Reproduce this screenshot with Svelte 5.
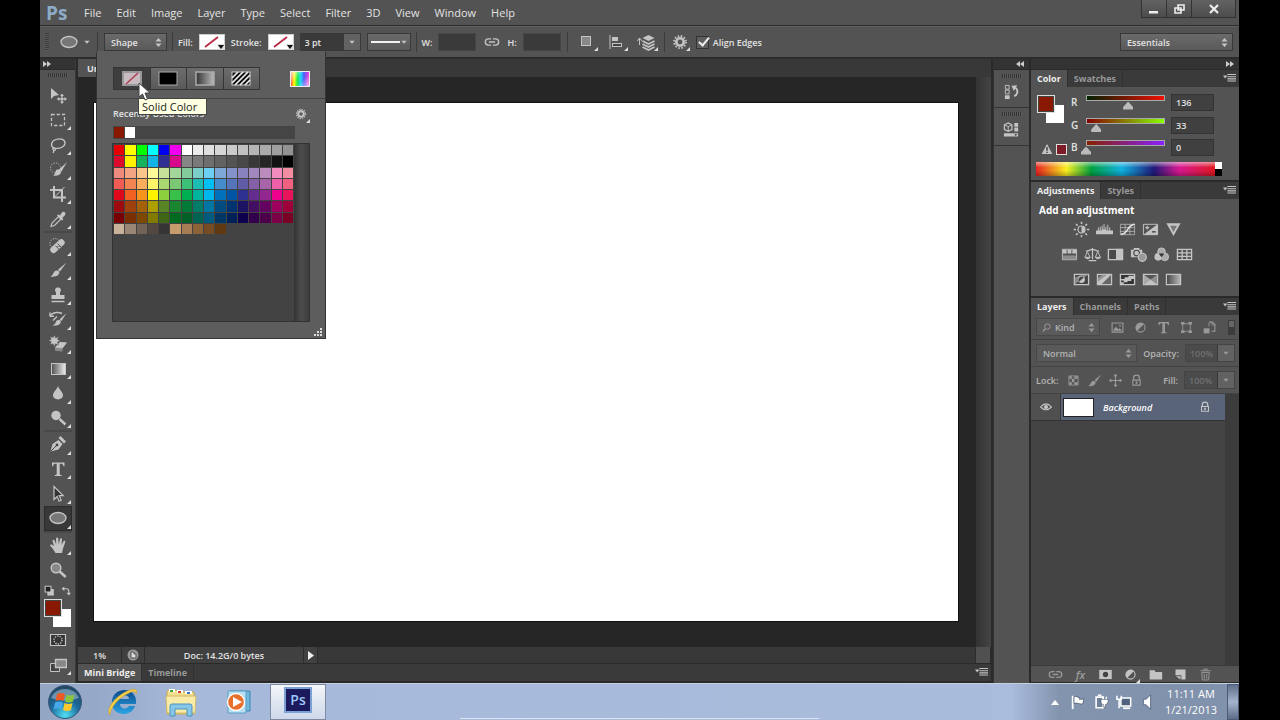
<script>
  const menus = ['File', 'Edit', 'Image', 'Layer', 'Type', 'Select', 'Filter', '3D', 'View', 'Window', 'Help'];

  const toolGroups = [
    ['move', 'marquee', 'lasso', 'quick', 'crop', 'eyedropper'],
    ['heal', 'brush', 'stamp', 'history', 'eraser', 'gradient', 'drop', 'dodge'],
    ['pen', 'type', 'arrow', 'ellipse'],
    ['hand', 'zoom'],
  ];
  const noFlyout = ['move', 'zoom'];

  const adjustments = [
    ['sun', 'levels', 'curves', 'exposure', 'vibrance'],
    ['hue', 'balance', 'bw', 'photo', 'mixer', 'lookup'],
    ['invert', 'poster', 'threshold', 'selective', 'gradmap'],
  ];
  const filters = ['image', 'half', 'type', 'shape', 'smart'];
  const locks = ['checker', 'brush', 'moveall', 'lock'];
  const footer = ['link', 'fx', 'mask', 'half', 'folder', 'newlayer', 'trash'];

  const palette = [
    '#e80000 #ffff00 #00ff00 #00ffff #0000f0 #f000f0 #ffffff #ececec #e0e0e0 #d6d6d6 #cacaca #c0c0c0 #b5b5b5 #aaaaaa #9e9e9e #929292',
    '#dd0a2c #fff200 #16b35c #12b4e6 #302e92 #d80a8c #868686 #7a7a7a #6e6e6e #626262 #545454 #484848 #383838 #262626 #121212 #000000',
    '#f08a7c #f4a482 #fac48a #fff899 #c6e29a #a2d69a #82cc9c #7bcdc8 #6ccff4 #7ea8d8 #8492cc #8882be #a286be #bc8cbe #f28cbe #f28ca0',
    '#ee5c54 #f28454 #f8ae5c #fff568 #aad870 #7ac874 #3cc078 #1abcb4 #00bff3 #448ccb #5674b9 #605ca8 #8560a8 #a864a8 #f060a8 #f06080',
    '#e0081c #f26022 #f7941d #fff200 #8cd03e #39c04a #00b050 #00b49d #00b8ee #0072bc #0054a6 #2e3192 #662d91 #92278f #ec008c #e8145b',
    '#9e0b0f #a0410d #a36209 #aba000 #598527 #1a8530 #007a36 #007c6b #0076a3 #004b80 #003471 #1b1464 #440e62 #630460 #9e005d #9e0039',
    '#790000 #7b2e00 #7d4900 #827b00 #406618 #006a20 #006026 #006452 #005b7f #003663 #002157 #0d004c #32004b #4b0049 #7b0046 #7a0026',
    '#c8b299 #998675 #736357 #534741 #373435 #c69c6d #a67c52 #8c6239 #754c24 #603913',
  ].flatMap((row) => row.split(' '));

  let channels = $state([
    { id: 'R', value: 136, cls: 'red' },
    { id: 'G', value: 33, cls: 'green' },
    { id: 'B', value: 0, cls: 'blue' },
  ]);
  let strokeWidth = $state('3 pt');
  let alignEdges = $state(true);
  let activeTool = $state('ellipse');

  // 18x18 glyphs, drawn in currentColor
  const icons = {
    move: '<path d="M2 2v11l3-3 5-1z" fill="currentColor"/><path d="M13 9v8M9 13h8" stroke="currentColor" stroke-width="1.4"/><path d="M13 7.500l-2 2.500h4zM13 18l-2-2.500h4zM7.800 13l2.400-2v4zM18 13l-2.400-2v4z" fill="currentColor"/>',
    marquee: '<rect x="2.500" y="3.500" width="13" height="11" fill="none" stroke="currentColor" stroke-width="1.300" stroke-dasharray="3.200 2"/>',
    lasso: '<path d="M5 12C1 10 2 5 7 3.500s9 0 9 3.500-5 6-9.500 5.200C4 11.500 3 13 4.500 14s3-.5 1-2M4.800 14q.2 1.500-.8 3" fill="none" stroke="currentColor" stroke-width="1.300"/>',
    quick: '<circle cx="6.500" cy="8" r="5" fill="none" stroke="currentColor" stroke-dasharray="1.200 1.400"/><path d="M18 2l-5.500 9.500-2.500-2z" fill="currentColor"/><path d="M9.500 9.500c2 0 3.500 2 2 4s-4 2.500-7.500 2c2-1 2-2 2.500-4s1.500-2 3-2z" fill="currentColor"/>',
    crop: '<path d="M5 1v11.500h12M1 5h12v12" fill="none" stroke="currentColor" stroke-width="2"/><path d="M6 11.500L15.500 2" stroke="currentColor"/>',
    eyedropper: '<path d="M2 16.500l1-3.500 6.500-6.500 2.500 2.500-6.500 6.500z" fill="none" stroke="currentColor" stroke-width="1.200"/><path d="M8 5.500l1.300-1.200 1.500 1.200 2.200-3c1.500-1.800 4.500.5 3 2.700l-2.700 2.500 1 1.500-1.200 1.300z" fill="currentColor"/>',
    heal: '<circle cx="6" cy="7.500" r="5" fill="none" stroke="currentColor" stroke-dasharray="1.200 1.400"/><rect x="0" y="6.500" width="17" height="6.500" rx="3" transform="rotate(-43 9 10)" fill="currentColor"/><path d="M8.500 7.500l4 4M6.500 9.800l4 4" stroke="#535353"/><path d="M8.500 10.500h1M10.500 10.500h1" stroke="#444"/>',
    brush: '<path d="M17.500 1.500l-6.500 9-2-1.700z" fill="currentColor"/><path d="M8.300 9.500c1.700.2 2.500 1.500 1.800 3-.8 2.500-4.500 3.700-9.100 3.200 2-.6 2.500-1.700 3.500-3.700s2-2.700 3.800-2.500z" fill="currentColor"/>',
    stamp: '<path d="M7 9V6.500C5 3.500 6.500 1.500 9 1.500s4 2 2 5V9h4.500v4h-13V9z" fill="currentColor"/><path d="M2.500 15.500h13" stroke="currentColor" stroke-width="1.500"/>',
    history: '<path d="M1.500 5C5 2 10 2 13 3.500M1 6.500V2.500M1 6.200h4M8 6.500l-4 4" fill="none" stroke="currentColor" stroke-width="1.400"/><path d="M17.500 3l-5 8-2-1.600z" fill="currentColor"/><path d="M10 10c1.700.2 2.300 1.500 1.600 2.800-.8 2-4 3.400-8.100 3 2-.8 2.500-1.800 3.200-3.500S8.300 9.800 10 10z" fill="currentColor"/>',
    eraser: '<path d="M6 12.500L11 7l7 .5-4.500 6v3l-7.500-.8z" fill="#8a8a8a"/><path d="M6 12.500L11 7l7 .5-4.500 5.800z" fill="currentColor"/><path d="M5.500 0l1.200 3 3-1.500-1.200 3 3 1.200-3 1.300 1 3-3-1.200-1.200 3-1.300-3-3 1 1.200-3-2.700-1.300 2.700-1.200L1.200 1.500l3 1z" fill="currentColor" stroke="#535353" stroke-width=".5"/>',
    gradient: '<defs><linearGradient id="g1"><stop stop-color="#505050"/><stop offset="1" stop-color="#f0f0f0"/></linearGradient></defs><rect x="2.500" y="3.500" width="14" height="11" fill="url(#g1)" stroke="currentColor"/>',
    drop: '<path d="M9 2c1 3.500 5 6 5 9.300 0 5.500-10 5.500-10 0C4 8 8 5.500 9 2z" fill="currentColor"/>',
    dodge: '<circle cx="7" cy="6.500" r="4.700" fill="currentColor"/><path d="M10.500 10l6 5.500" stroke="currentColor" stroke-width="2.400"/>',
    pen: '<path d="M1.500 16.500L3.500 9l6-4 4 4-4 5.500z" fill="currentColor"/><path d="M9.500 3l2-2 5.500 5.500-2 2z" fill="currentColor"/><path d="M2 16l5.500-5.500" stroke="#444"/><circle cx="8" cy="10" r="1.400" fill="#444"/>',
    type: '<path d="M3 2.500h12.500v3.800h-1c-.3-2-1-2.500-3.800-2.500v10c0 1 .5 1.200 2 1.300v.9h-7v-.9c1.600-.1 2-.3 2-1.300v-10C5 3.800 4.300 4.300 4 6.300H3z" fill="currentColor"/>',
    arrow: '<path d="M5 1.500v13l3.200-3 2 4.800 2-1-2-4.600h4z" fill="#333" stroke="currentColor" stroke-width="1.200"/>',
    ellipse: '<ellipse cx="9" cy="9" rx="8" ry="5.500" fill="#777" stroke="currentColor" stroke-width="1.300"/>',
    hand: '<path d="M6.500 17C5 14 3 12 1 9.500c.5-1.500 2-1.300 4 .8L3.500 4.500c.3-1.300 1.800-1 2.200.3L7.200 8.500 7 2.500c.3-1.300 2-1.300 2.200 0l.6 6 1.200-5.500c.5-1.200 2-1 2 .3L12.500 9l2-3.700c.8-1 2.200-.4 1.800.8L14 12.500l-1 4.500z" fill="currentColor"/>',
    zoom: '<circle cx="7" cy="7" r="4.800" fill="#888" stroke="currentColor" stroke-width="1.500"/><path d="M10.700 10.500l6 5.500" stroke="currentColor" stroke-width="2.600"/>',
    gear: '<circle cx="9" cy="9" r="4.200" fill="none" stroke="currentColor" stroke-width="3"/><circle cx="9" cy="9" r="6.800" fill="none" stroke="currentColor" stroke-width="2" stroke-dasharray="1.800 1.760"/>',
    link: '<path d="M8 5.500H5a3.400 3.400 0 0 0 0 7h3M10 5.500h3a3.400 3.400 0 0 1 0 7h-3M5.500 9h7" fill="none" stroke="currentColor" stroke-width="1.600"/>',
    combine: '<rect x="4.500" y="3.500" width="9" height="9" fill="#888" stroke="currentColor"/>',
    align: '<path d="M3 2v14" stroke="currentColor"/><rect x="5" y="4" width="6" height="4" fill="currentColor"/><rect x="5.500" y="10.500" width="9" height="3" fill="#444" stroke="currentColor"/>',
    stack: '<path d="M11.500 2l6 3-6 3-6-3z" fill="currentColor"/><path d="M5.500 8l6 3 6-3M5.500 11l6 3 6-3M5.500 14l6 3 6-3" fill="none" stroke="currentColor" stroke-width="1.700"/><path d="M2.500 5v7M0 8l2.500-3L5 8" fill="none" stroke="currentColor"/>',
    dockhist: '<path d="M2.500 2.500h4v4h-4zM2.500 7.500h4v4h-4z" fill="none" stroke="currentColor"/><path d="M2 13h5v4H2z" fill="currentColor"/><path d="M12 14c4-2 4.500-7 .5-9.500" fill="none" stroke="currentColor" stroke-width="2"/><path d="M9 3l6-.5-3.500 6z" fill="currentColor"/>',
    dockprops: '<path d="M5.500 2l4 2v5l-4 2-4-2V4z" fill="none" stroke="currentColor" stroke-width="1.300"/><path d="M1.500 4l4 2 4-2M5.500 6v5" stroke="currentColor" fill="none"/><path d="M12 2h4v4h-4zM12 7h4v4h-4zM1 13h15v3.500H1z" fill="currentColor"/><path d="M12 14h3l-1.500 2z" fill="#333"/>',
    sun: '<circle cx="9" cy="9" r="3.700" fill="none" stroke="currentColor" stroke-width="1.300"/><path d="M9 5.500a3.500 3.500 0 0 1 0 7z" fill="currentColor"/><path d="M9 .8v2.400M9 14.800v2.400M.8 9h2.400M14.800 9h2.400M3.200 3.200l1.700 1.700M13.100 13.100l1.700 1.700M14.800 3.200l-1.700 1.700M4.900 13.100l-1.700 1.700" stroke="currentColor" stroke-width="1.600"/>',
    levels: '<path d="M0 14v-4h2V7h1v3h1V6h1v4h1V5h1v4h1V3h1v6h1V6h1v4h1V4h1v6h1V7h1v3h3v4z" fill="currentColor"/>',
    curves: '<path d="M1.500 3.500h15v11h-15zM1.500 7h15M1.500 11h15M6.500 3.500v11M11.500 3.500v11" fill="none" stroke="currentColor" stroke-opacity=".75"/><path d="M2 14c8 0 6-9.500 14.500-10.500" fill="none" stroke="#e8e8e8" stroke-width="1.500"/>',
    exposure: '<path d="M1.500 3.500h15v11h-15z" fill="none" stroke="currentColor"/><path d="M16.500 3.500v11h-15z" fill="currentColor"/><path d="M3.500 7h4M5.500 5v4" stroke="currentColor" stroke-width="1.200"/><path d="M10.500 11.500h4" stroke="#333" stroke-width="1.300"/>',
    vibrance: '<path d="M1.500 2.500h15L9 16z" fill="currentColor"/><path d="M5.500 5h7L9 12z" fill="#777"/>',
    hue: '<path d="M1.500 3.500h15v11h-15z" fill="none" stroke="currentColor"/><path d="M2 4h4v4H2zM7 4h4v4H7zM12 4h4v4h-4z" fill="currentColor"/><path d="M2 10h14v4H2z" fill="#8c8c8c"/>',
    balance: '<path d="M9 2v12M5 15.500h8M2 5.500c4 0 4-2 7-2s3 2 7 2" stroke="currentColor" stroke-width="1.300" fill="none"/><path d="M3.500 6L1 12h5.500zM14.500 6L12 12h5.500z" fill="none" stroke="currentColor"/><path d="M.5 12H7q-3 4-6.500 0zM11.500 12H18q-3 4-6.500 0z" fill="currentColor"/>',
    bw: '<path d="M1.500 3.500h15v11h-15z" fill="#4a4a4a" stroke="currentColor" stroke-width="1.400"/><path d="M9.500 3h7v11.500h-7z" fill="currentColor"/>',
    photo: '<path d="M1 4h3V2h6v2h3v8H1z" fill="currentColor"/><circle cx="7" cy="7.500" r="3" fill="none" stroke="#444" stroke-width="1.200"/><circle cx="13" cy="12" r="4.300" fill="#999" stroke="currentColor" stroke-width="1.200"/>',
    mixer: '<circle cx="9" cy="6" r="4" fill="#aaa" stroke="currentColor"/><circle cx="5.500" cy="11.500" r="4" fill="currentColor"/><circle cx="12.500" cy="11.500" r="4" fill="#aaa" stroke="currentColor"/><path d="M6 8h6l-3 4z" fill="#333"/>',
    lookup: '<path d="M1.500 3.500h15v11h-15zM1.500 7.200h15M1.500 11h15M6.500 3.500v11M11.500 3.500v11" fill="none" stroke="currentColor" stroke-width="1.400"/>',
    invert: '<path d="M1.500 3.500h15v11h-15z" fill="#444" stroke="currentColor" stroke-width="1.400"/><path d="M2 14L16 4H9L2 7z" fill="#888"/><circle cx="9" cy="9" r="3.600" fill="currentColor"/><path d="M6.500 11.500l5-5a3.600 3.600 0 0 0-5 5z" fill="#444"/>',
    poster: '<path d="M1.500 3.500h15v11h-15z" fill="#666" stroke="currentColor" stroke-width="1.300"/><path d="M2 11l9-7h5L6 14H2z" fill="currentColor"/><path d="M2 8l5-4h4l-9 7z" fill="#999"/>',
    threshold: '<path d="M1.500 3.500h15v11h-15z" fill="#333" stroke="currentColor" stroke-width="1.400"/><path d="M2 8.500h4v-2h4V5h6v3.500h-3v2H9V12H5v2H2v-2h3v-2H2z" fill="currentColor"/>',
    selective: '<path d="M1.500 3.500h15v11h-15z" fill="#555" stroke="currentColor" stroke-width="1.300"/><path d="M2 4l7 5-7 5z" fill="#aaa"/><path d="M16 4L9 9l7 5z" fill="#909090"/><path d="M2 14l7-5 7 5z" fill="currentColor"/>',
    gradmap: '<defs><linearGradient id="g2"><stop stop-color="#444"/><stop offset="1" stop-color="#bbb"/></linearGradient></defs><path d="M1.500 3.500h15v11h-15z" fill="url(#g2)" stroke="currentColor" stroke-width="1.300"/>',
    image: '<path d="M2.500 3.500h13v11h-13z" fill="none" stroke="currentColor" stroke-width="1.300"/><path d="M4 12l3-4 3 3 1.500-1 2.500 2v1H4z" fill="currentColor"/><circle cx="12" cy="6.800" r="1" fill="currentColor"/>',
    half: '<circle cx="9" cy="9" r="5.500" fill="none" stroke="currentColor" stroke-width="1.300"/><path d="M13.200 4.800a6 6 0 0 0-8.400 8.400z" fill="currentColor"/>',
    shape: '<path d="M4.500 4.500h9v9h-9z" fill="none" stroke="currentColor"/><path d="M2.500 2.500h4v3h-4zM11.500 2.500h4v3h-4zM2.500 12.500h4v3h-4zM11.500 12.500h4v3h-4z" fill="currentColor"/>',
    smart: '<path d="M8.500 2.500h4l3 3v8h-4" fill="none" stroke="currentColor" stroke-width="1.300"/><path d="M2 10h7v6H2z" fill="currentColor"/><path d="M12 2v4h4M8.500 3v5" fill="none" stroke="currentColor"/>',
    checker: '<path d="M3.500 3.500h11v11h-11z" fill="none" stroke="currentColor"/><path d="M4 4h3v3H4zM10 4h4v3h-4zM7 7h3v4H7zM4 11h3v3H4zM10 11h4v3h-4z" fill="currentColor"/>',
    moveall: '<path d="M9 3v12M3 9h12" stroke="currentColor" stroke-width="1.300"/><path d="M9 1L6.500 4h5zM9 17l-2.500-3h5zM1 9l3-2.500v5zM17 9l-3-2.500v5z" fill="currentColor"/>',
    lock: '<path d="M5.500 8V6c0-4.500 7-4.500 7 0v2" fill="none" stroke="currentColor" stroke-width="1.500"/><path d="M4.500 8.500h9v6h-9z" fill="none" stroke="currentColor" stroke-width="1.300"/><path d="M9 10v3" stroke="currentColor" stroke-width="2"/>',
    eye: '<path d="M2 9q7-8 14 0-7 7-14 0z" fill="none" stroke="currentColor" stroke-width="1.400"/><circle cx="9" cy="9" r="2.700" fill="currentColor"/>',
    mask: '<path d="M1.500 3.500h15v11h-15z" fill="currentColor"/><circle cx="9" cy="9" r="3.200" fill="#444"/>',
    folder: '<path d="M2 4h6l1 2h8v9H2z" fill="currentColor"/>',
    newlayer: '<path d="M3 3h12v12h-5v-5H3z" fill="currentColor"/><path d="M3.500 11H9v4z" fill="currentColor"/>',
    trash: '<path d="M4.500 6.500h9l-.7 9H5.200zM3 4.500h12M7 4V2.500h4V4M7.500 8v6M10.500 8v6" fill="none" stroke="currentColor" stroke-width="1.200"/>',
    quickmask: '<path d="M1.500 3.500h15v11h-15z" fill="#333" stroke="currentColor" stroke-width="1.200"/><circle cx="9" cy="9" r="4" fill="none" stroke="currentColor" stroke-width="1.400" stroke-dasharray="1.300 1.200"/>',
    screen: '<path d="M1.500 7.500h9v8h-9z" fill="#444" stroke="currentColor"/><path d="M6.500 3.500h11v8h-11z" fill="#888" stroke="currentColor" stroke-width="1.300"/>',
    defaults: '<path d="M6 7h9v9H6z" fill="currentColor"/><path d="M3 3h8v8H3z" fill="#222" stroke="currentColor" stroke-width="1.500"/>',
    swap: '<path d="M5 5h5q4 0 4 5v3" fill="none" stroke="currentColor" stroke-width="2"/><path d="M1 5l5-4v8zM10 12h8l-4 5z" fill="currentColor"/>',
    search: '<circle cx="10.500" cy="7.500" r="4.500" fill="none" stroke="currentColor" stroke-width="1.600"/><path d="M7 11l-4 4.500" stroke="currentColor" stroke-width="2"/>',
    sort: '<path d="M9 0l6 7H3zM9 18l6-7H3z" fill="currentColor"/>',
    caret: '<path d="M3 6h12l-6 7z" fill="currentColor"/>',
    warn: '<path d="M9 1.500l8 15H1z" fill="currentColor"/><path d="M9 6v5.500M9 13v2" stroke="#333" stroke-width="2"/>',
    panelmenu: '<path d="M0 5h6l-3 4z" fill="currentColor"/><path d="M6 3.500h12M6 6.500h12M6 9.500h12M6 12.500h12" stroke="currentColor" stroke-width="1.500"/>',
    flag: '<path d="M3 2v15" stroke="#fff" stroke-width="2"/><path d="M4.500 3c3-1 4 1 6 1v2c2 0 3 0 5-.5l-1 5.500c-4 1-5-1.500-10-.5z" fill="#fff" stroke="#34455f" stroke-width=".7"/>',
    battery: '<path d="M3.500 3.500h8v12h-8z" fill="#718199" stroke="#fff" stroke-width="1.800"/><path d="M5.500 1.500h4M11 3v3M15 3v3" stroke="#fff" stroke-width="1.600"/><path d="M9 6h8v3q-1 3-3 3v3h-2v-3q-3 0-3-3z" fill="#fff" stroke="#34455f" stroke-width=".6"/>',
    network: '<path d="M5.500 4.500h11v9h-11z" fill="#50627e" stroke="#fff" stroke-width="1.700"/><path d="M8 16h8" stroke="#fff" stroke-width="2"/><path d="M1 2v4h5V2M3.500 6v10" fill="none" stroke="#fff" stroke-width="1.700"/>',
    speaker: '<path d="M5 6h3l5-5v16l-5-5H5z" fill="#fff" stroke="#34455f" stroke-width=".7"/>',
  };
</script>

{#snippet icon(name, size = 18)}
  <svg viewBox="0 0 18 18" width={size} height={size} aria-hidden="true">{@html icons[name]}</svg>
{/snippet}

{#snippet none()}
  <svg viewBox="0 0 26 16" width="26" height="16" aria-hidden="true">
    <rect x="0.500" y="0.500" width="25" height="15" fill="#fff" stroke="#ccc" />
    <path d="M6 13L19 3" stroke="#b82a48" stroke-width="1.800" />
    <path d="M18 10h8v6h-5z" fill="#ddd" /><path d="M19 11h6l-3 4z" fill="#111" />
  </svg>
{/snippet}

{#snippet tabs(names)}
  <div class="tabs">
    {#each names as name, i}
      <button class="tab" class:active={i === 0}>{name}</button>
    {/each}
    <button class="panel-menu" aria-label="Panel menu">{@render icon('panelmenu', 13)}</button>
  </div>
{/snippet}

<div class="desktop">
  <header class="menubar">
    <span class="logo">Ps</span>
    <nav>
      {#each menus as menu}
        <button>{menu}</button>
      {/each}
    </nav>
    <div class="window-buttons">
      <button aria-label="Minimize"><svg width="12" height="12"><path d="M1 8h9v2.500H1z" fill="#eee" /></svg></button>
      <button aria-label="Restore"><svg width="12" height="12"><path d="M5 2h6v5H5zM2 5h6v5H2z" fill="#555" stroke="#eee" stroke-width="1.600" /></svg></button>
      <button class="close" aria-label="Close"><svg width="12" height="12"><path d="M2 2l8 8M10 2l-8 8" stroke="#eee" stroke-width="2.200" /></svg></button>
    </div>
  </header>

  <div class="options">
    <span class="grip-v"></span>
    <button class="preset" aria-label="Tool preset">{@render icon('ellipse')}{@render icon('caret', 8)}</button>
    <span class="sep"></span>
    <span class="select mode">
      <select aria-label="Tool mode"><option>Shape</option></select>
      {@render icon('sort', 9)}
    </span>
    <span class="sep tight"></span>
    <span>Fill:</span>
    <button class="swatch-btn" aria-label="Fill">{@render none()}</button>
    <span>Stroke:</span>
    <button class="swatch-btn" aria-label="Stroke">{@render none()}</button>
    <span class="combo">
      <input aria-label="Stroke width" bind:value={strokeWidth} />
      <button aria-label="Stroke width list">{@render icon('caret', 8)}</button>
    </span>
    <button class="line-style" aria-label="Stroke type"><span class="line"></span>{@render icon('caret', 8)}</button>
    <span class="sep tight"></span>
    <label class="dim">W:<input /></label>
    <button class="plain" aria-label="Link dimensions">{@render icon('link', 16)}</button>
    <label class="dim">H:<input /></label>
    <span class="sep"></span>
    <button class="plain wide flyout" aria-label="Path operations">{@render icon('combine')}</button>
    <button class="plain wide flyout" aria-label="Path alignment">{@render icon('align')}</button>
    <button class="plain wide flyout" aria-label="Path arrangement">{@render icon('stack')}</button>
    <span class="sep"></span>
    <button class="plain flyout" aria-label="Shape options">{@render icon('gear', 16)}</button>
    <label class="check"><input type="checkbox" bind:checked={alignEdges} /> Align Edges</label>
    <span class="select workspace">
      <select aria-label="Workspace"><option>Essentials</option></select>
      {@render icon('sort', 9)}
    </span>

    <div class="popup">
      <div class="fill-types">
        <div class="type-group">
          <button class="on" aria-label="No color">
            <svg width="20" height="15"><rect x="1" y="1" width="18" height="13" fill="#c8bcc0" stroke="#999" stroke-width="2" /><path d="M4 13L16 2" stroke="#b04058" stroke-width="1.600" /></svg>
          </button>
          <button aria-label="Solid color">
            <svg width="20" height="15"><rect x="1" y="1" width="18" height="13" stroke="#aaa" /></svg>
          </button>
          <button aria-label="Gradient">
            <svg width="20" height="15">
              <defs><linearGradient id="fg"><stop stop-color="#333" /><stop offset="1" stop-color="#bbb" /></linearGradient></defs>
              <rect x="1" y="1" width="18" height="13" fill="url(#fg)" stroke="#aaa" stroke-width="1.500" />
            </svg>
          </button>
          <button aria-label="Pattern">
            <svg width="20" height="15">
              <rect x="1" y="1" width="18" height="13" fill="#111" stroke="#ccc" />
              <path d="M1 7l6-6M1 12l11-11M4 14L17 1M9 14L19 4M14 14l5-5" stroke="#eee" stroke-width="1.700" />
            </svg>
          </button>
        </div>
        <button class="picker" aria-label="Color picker"></button>
      </div>
      <div class="recent-head">
        <span>Recently Used Colors</span>
        <button class="plain flyout" aria-label="Swatch options">{@render icon('gear', 12)}</button>
      </div>
      <div class="recent"><span class="rust"></span><span class="white"></span></div>
      <div class="palette">
        <div class="cells">
          {#each palette as color}
            <button style:background={color} aria-label={color}></button>
          {/each}
        </div>
        <div class="track"></div>
      </div>
      <svg class="resize" width="9" height="9" aria-hidden="true"><path d="M6 0h2v2H6zM6 3h2v2H6zM6 6h2v2H6zM3 3h2v2H3zM3 6h2v2H3zM0 6h2v2H0z" fill="#ddd" /></svg>
      <div class="tooltip" role="tooltip">Solid Color</div>
      <svg class="cursor" width="13" height="19" aria-hidden="true"><path d="M1 1v14l3.500-3 2.500 6 2.500-1-2.500-6h5z" fill="#fff" stroke="#444" /></svg>
    </div>
  </div>

  <main>
    <aside class="toolbox">
      <div class="strip left"><svg width="9" height="6"><path d="M0 0l4 3-4 3zM4 0l4 3-4 3z" fill="#ccc" /></svg></div>
      <span class="grip-h"></span>
      {#each toolGroups as group}
        <div class="group" style:flex-grow={group.length}>
          {#each group as tool}
            <button
              class="tool"
              class:flyout={!noFlyout.includes(tool)}
              class:selected={tool === activeTool}
              aria-label={tool}
              onclick={() => (activeTool = tool)}
            >{@render icon(tool)}</button>
          {/each}
        </div>
      {/each}
      <div class="mini">
        <button class="plain" aria-label="Default colors">{@render icon('defaults', 13)}</button>
        <button class="plain" aria-label="Swap colors">{@render icon('swap', 10)}</button>
      </div>
      <div class="pair"><span class="back"></span><span class="front"></span></div>
      <button class="tool bottom" aria-label="Quick mask">{@render icon('quickmask')}</button>
      <button class="tool bottom flyout" aria-label="Screen mode">{@render icon('screen')}</button>
    </aside>

    <section class="document">
      <div class="doc-tabs"><button class="doc-tab">Untitled-1 @ 1% (RGB/8)</button></div>
      <div class="view">
        <div class="work"><div class="canvas"></div></div>
        <div class="scroll-v"></div>
      </div>
      <div class="status">
        <span class="zoom">1%</span>
        <span class="share"><svg width="12" height="12"><circle cx="6" cy="6" r="5.500" fill="#999" /><path d="M4 3h3v2h2v4H4z" fill="#ddd" stroke="#555" /></svg></span>
        <span class="doc-size">Doc: 14.2G/0 bytes</span>
        <button class="more" aria-label="Status menu"><svg width="7" height="9"><path d="M1 0l6 4.500L1 9z" fill="#eee" /></svg></button>
        <span class="scroll-h"></span>
        <span class="corner"></span>
      </div>
      {@render tabs(['Mini Bridge', 'Timeline'])}
    </section>

    <aside class="dock">
      <div class="strip right"><svg width="9" height="6"><path d="M4 0L0 3l4 3zM8 0L4 3l4 3z" fill="#ccc" /></svg></div>
      <div class="dock-box"><span class="grip-h"></span><button class="plain" aria-label="History">{@render icon('dockhist', 17)}</button></div>
      <div class="dock-box"><span class="grip-h"></span><button class="plain" aria-label="Properties">{@render icon('dockprops', 17)}</button></div>
    </aside>

    <aside class="panels">
      <div class="strip right"><svg width="9" height="6"><path d="M0 0l4 3-4 3zM4 0l4 3-4 3z" fill="#ccc" /></svg></div>
      <section class="panel">
        {@render tabs(['Color', 'Swatches'])}
        <div class="color">
          <div class="color-left">
            <div class="pair"><span class="back"></span><span class="front"></span></div>
            <div class="gamut">{@render icon('warn', 12)}<span></span></div>
          </div>
          <div class="sliders">
            {#each channels as ch}
              <div class="channel">
                <label for="ch-{ch.id}">{ch.id}</label>
                <div class="slider">
                  <div class="bar {ch.cls}"></div>
                  <input type="range" min="0" max="255" aria-label="{ch.id} slider" bind:value={ch.value} />
                </div>
                <input class="num" id="ch-{ch.id}" bind:value={ch.value} />
              </div>
            {/each}
          </div>
        </div>
        <div class="spectrum"><span class="ramp"></span><span class="ends"></span></div>
      </section>

      <section class="panel">
        {@render tabs(['Adjustments', 'Styles'])}
        <div class="adjust">
          <h2>Add an adjustment</h2>
          {#each adjustments as row}
            <div class="adj-row">
              {#each row as name}
                <button class="plain" aria-label={name}>{@render icon(name, 17)}</button>
              {/each}
            </div>
          {/each}
        </div>
      </section>

      <section class="panel layers">
        {@render tabs(['Layers', 'Channels', 'Paths'])}
        <div class="row first">
          <span class="select kind">
            <span class="lens">{@render icon('search', 11)}</span>
            <select aria-label="Filter kind"><option>Kind</option></select>
            {@render icon('sort', 9)}
          </span>
          <span class="filters">
            {#each filters as name}
              <button class="plain" aria-label={name}>{@render icon(name, 15)}</button>
            {/each}
          </span>
          <span class="switch"></span>
        </div>
        <div class="row">
          <span class="select blend">
            <select aria-label="Blend mode"><option>Normal</option></select>
            {@render icon('sort', 9)}
          </span>
          <label class="amount" for="opacity">Opacity:</label>
          <span class="combo small"><input id="opacity" value="100%" disabled /><button aria-label="Opacity slider">{@render icon('caret', 8)}</button></span>
        </div>
        <div class="row">
          <span>Lock:</span>
          <span class="locks">
            {#each locks as name}
              <button class="plain" aria-label={name}>{@render icon(name, 15)}</button>
            {/each}
          </span>
          <label class="amount" for="fill">Fill:</label>
          <span class="combo small"><input id="fill" value="100%" disabled /><button aria-label="Fill slider">{@render icon('caret', 8)}</button></span>
        </div>
        <div class="list">
          <div class="items">
            <div class="layer">
              <button class="eye" aria-label="Visibility">{@render icon('eye', 14)}</button>
              <div class="layer-body"><span class="thumb"></span><em>Background</em>{@render icon('lock', 14)}</div>
            </div>
          </div>
          <div class="list-scroll"></div>
        </div>
        <div class="layer-foot">
          {#each footer as name}
            <button class="plain" class:flyout={name === 'half'} class:dim-icon={['link', 'fx', 'trash'].includes(name)} aria-label={name}>
              {#if name === 'fx'}<i>fx</i>{:else}{@render icon(name, 15)}{/if}
            </button>
          {/each}
        </div>
      </section>
    </aside>
  </main>

  <footer class="taskbar">
    <button class="task" aria-label="Start">
      <svg width="36" height="36" viewBox="0 0 36 36">
        <defs><radialGradient id="orb" cy="0.9" r="0.9"><stop stop-color="#4fe0f4" /><stop offset="0.500" stop-color="#1c6a9c" /><stop offset="1" stop-color="#24435f" /></radialGradient></defs>
        <circle cx="18" cy="18" r="16.500" fill="url(#orb)" stroke="#3c5878" />
        <path d="M4 14a14.500 12 0 0 1 28 0q-14 5-28 0z" fill="#c8dcea" fill-opacity=".45" />
        <path d="M10 10q4-2 8 0l-1.500 7q-4-2-8 0z" fill="#ee5a24" /><path d="M19.500 10.500q4 2 8 0l-1.500 7q-4 2-8 0z" fill="#8cc63e" />
        <path d="M8 18.500q4-2 8 0l-1.500 7q-4-2-8 0z" fill="#46a8e8" /><path d="M17.500 19q4 2 8 0l-1.500 7q-4 2-8 0z" fill="#fbc92e" />
      </svg>
    </button>
    <button class="task" aria-label="Internet Explorer">
      <svg width="34" height="30" viewBox="0 0 34 30">
        <defs><linearGradient id="ie" x2="0" y2="1"><stop stop-color="#0c4a8c" /><stop offset="1" stop-color="#2aa4e4" /></linearGradient></defs>
        <path d="M30 17H14c0 5 7 6 9 2h6c-2 6-7 8-12 8-15-1-15-23 1-24 9 0 13 7 12 14zM14 12h9c0-5-8-5-9 0z" fill="url(#ie)" />
        <path d="M4 28C-1 23 9 8 24 3c6-2 8 0 6 4 0-3-3-3-7-1C12 11 4 21 4 28z" fill="#f4cf4a" stroke="#c89c28" stroke-width=".6" />
      </svg>
    </button>
    <button class="task" aria-label="Explorer">
      <svg width="32" height="30" viewBox="0 0 32 30">
        <path d="M2 5q0-2 2-2h7l2 2h16v22H2z" fill="#f3df8c" stroke="#c4a650" /><path d="M4 2h6v3H4zM12 3h6v3h-6zM20 4h7v3h-7z" fill="#fff" /><path d="M5 3h3v2H5z" fill="#3ba43b" /><path d="M13 4h3v2h-3z" fill="#d43b2f" /><path d="M22 5h3v2h-3z" fill="#3b74cf" />
        <path d="M1 9h30l-1 17H2z" fill="#f9eba8" stroke="#d1b968" /><path d="M5 29V19q0-2 2-2h18q2 0 2 2v10h-5v-7H10v7z" fill="#86c7e8" stroke="#4a94be" />
      </svg>
    </button>
    <button class="task" aria-label="Media Player">
      <svg width="30" height="28" viewBox="0 0 30 28">
        <path d="M6 3h20v20H6z" fill="#6fb7dc" stroke="#3c86b0" /><path d="M4 3h18v22H4z" fill="#b9def0" stroke="#5a9fc4" />
        <circle cx="12" cy="14" r="8.500" fill="#e8702a" stroke="#fff" stroke-width="1.300" /><path d="M9 9l9 5-9 5z" fill="#fff" />
      </svg>
    </button>
    <button class="task running"><span class="ps-tile">Ps</span></button>
    <div class="tray">
      <svg class="up" width="8" height="5"><path d="M4 0l4 5H0z" fill="#fff" /></svg>
      {#each ['flag', 'battery', 'network', 'speaker'] as name}
        {@render icon(name, 16)}
      {/each}
      <time>11:11 AM<br />1/21/2013</time>
      <span class="peek"></span>
    </div>
  </footer>
</div>

<style>
  :global(body) { background:#000; }
  .desktop { box-sizing:border-box; height:100vh; padding:0 41px 0 40px; display:flex; flex-direction:column; font-family:"Open Sans", sans-serif; font-size:9px; font-weight:600; color:#e2e2e2; }
  .desktop * { box-sizing:border-box; }
  button { margin:0; padding:0; border:0; background:none; font:inherit; color:inherit; }
  input, select { margin:0; font:inherit; color:inherit; min-width:0; border-radius:0; }
  svg { display:block; flex:none; color:#c4c4c4; }
  .plain { display:flex; align-items:center; justify-content:center; width:19px; height:20px; }
  .flyout { position:relative; }
  .flyout::after { content:""; position:absolute; right:0; bottom:1px; border:2px solid; border-color:transparent #ddd #ddd transparent; }

  .menubar { flex:none; height:26px; display:flex; align-items:center; background:#535353; border-bottom:1px solid #2c2c2c; font-size:11px; font-weight:400; }
  .logo { width:44px; padding-left:6px; font-size:19px; line-height:24px; font-weight:700; color:#8dabc8; }
  nav { flex:1; display:flex; gap:15px; }
  .window-buttons { align-self:flex-start; display:flex; height:18px; margin-right:3px; border:1px solid #333; border-top:0; background:linear-gradient(#636363, #4c4c4c); }
  .window-buttons button { width:25px; display:flex; align-items:center; justify-content:center; border-right:1px solid #333; }
  .window-buttons .close { width:43px; border:0; }

  .options { position:relative; flex:none; height:33px; display:flex; align-items:center; gap:6px; padding:0 6px 0 5px; background:#535353; border-top:1px solid #626262; border-bottom:2px solid #2c2c2c; }
  .grip-v { width:4px; height:18px; background:repeating-linear-gradient(#3a3a3a 0 1px, #5c5c5c 1px 2px); }
  .preset { width:36px; display:flex; align-items:center; justify-content:space-between; padding-left:5px; }
  .sep { width:1px; height:20px; background:#3c3c3c; }
  .sep.tight { margin:0 -1px; }
  .select { display:grid; grid-template-columns:1fr 12px; align-items:center; height:18px; border:1px solid #393939; background:linear-gradient(#6a6a6a, #5a5a5a); }
  .select select { appearance:none; grid-area:1 / 1 / 2 / 3; width:100%; height:16px; padding:0 6px; border:0; background:none; }
  .select > :global(svg) { grid-area:1 / 2; }
  .mode { width:63px; }
  .workspace { width:113px; margin-left:auto; }
  .swatch-btn { width:26px; }
  .combo { display:flex; width:61px; height:18px; border:1px solid #393939; }
  .combo input { flex:1; width:0; padding:0 4px; border:0; background:#3a3a3a; }
  .combo button { width:17px; display:flex; align-items:center; justify-content:center; background:#626262; border-left:1px solid #393939; }
  .line-style { width:44px; height:18px; display:flex; align-items:center; justify-content:space-between; padding:0 2px 0 3px; border:1px solid #393939; background:linear-gradient(#6a6a6a, #5a5a5a); }
  .line { flex:1; height:2px; background:#f4f4f4; }
  .dim { display:flex; align-items:center; gap:6px; }
  .dim input { width:38px; height:18px; border:1px solid #454545; background:#3a3a3a; }
  .wide { width:24px; }
  .check { display:flex; align-items:center; gap:4px; }
  .check input { appearance:none; width:13px; height:13px; border:1px solid #333; background:#5e5e5e; position:relative; }
  .check input:checked::after { content:""; position:absolute; left:4px; top:-2px; width:4px; height:9px; border:solid #eee; border-width:0 2px 2px 0; transform:rotate(40deg); }

  .popup { position:absolute; left:56px; top:24px; z-index:10; width:230px; height:288px; background:#5d5d5d; border:1px solid #333; border-top-color:#5d5d5d; }
  .fill-types { display:flex; justify-content:space-between; align-items:center; height:47px; padding:7px 15px 0 16px; border-bottom:1px solid #444; }
  .type-group { display:flex; width:147px; height:23px; border:1px solid #353535; }
  .type-group button { flex:1; display:flex; align-items:center; justify-content:center; background:linear-gradient(#6c6c6c, #5a5a5a); border-right:1px solid #353535; }
  .type-group button:last-child { border:0; }
  .type-group .on { background:#3e3e3e; }
  .picker { width:20px; height:16px; border:1px solid #eee; background:linear-gradient(135deg, #fffb, #fff0 40% 60%, #fff9), linear-gradient(90deg, #ff5040, #ff0 18%, #20e850 36%, #20d8f8 54%, #5060f8 72%, #f838d8); }
  .recent-head { display:flex; align-items:center; justify-content:space-between; height:28px; padding:1px 15px 0 16px; }
  .recent { display:flex; width:182px; height:13px; margin:-1px 0 4px 16px; padding:1px; gap:1px; background:#454545; }
  .recent span { width:10px; height:11px; }
  .rust { background:#881800; }
  .white { background:#fff; }
  .palette { display:flex; width:198px; height:179px; margin-left:15px; background:#434343; border:1px solid #333; }
  .cells { flex:1; display:grid; grid-template-columns:repeat(16, 1fr); gap:1px; align-content:start; padding:1px; }
  .cells button { aspect-ratio:1; min-width:0; }
  .track { width:15px; background:linear-gradient(90deg, #333, #4c4c4c 50%, #3c3c3c); }
  .resize { position:absolute; right:2px; bottom:1px; }
  .tooltip { position:absolute; left:41px; top:46px; padding:0 9px 0 3px; border:1px solid #444; background:#ffffe1; color:#222; font-size:11px; line-height:15px; font-weight:400; }
  .cursor { position:absolute; left:41px; top:30px; }

  main { flex:1; min-height:0; display:flex; background:#2a2a2a; }
  .strip { flex:none; height:11px; display:flex; align-items:center; padding:0 4px; background:#333; border-bottom:1px solid #2a2a2a; }
  .strip.right { justify-content:flex-end; }
  .grip-h { flex:none; width:20px; height:4px; background:repeating-linear-gradient(90deg, #333 0 1px, #5c5c5c 1px 2px); }
  .toolbox { width:36px; display:flex; flex-direction:column; align-items:center; padding-bottom:6px; background:#535353; border-right:1px solid #3a3a3a; }
  .toolbox > .strip { align-self:stretch; padding-left:3px; }
  .toolbox > .grip-h { margin:3px 0 6px; }
  .group { flex:1 1 0; display:flex; flex-direction:column; border-bottom:2px solid #484848; }
  .group:nth-of-type(5) { border:0; }
  .tool { flex:1; width:28px; display:flex; align-items:center; justify-content:center; border:1px solid transparent; }
  .tool.selected { background:#383838; border-color:#2c2c2c; }
  .tool.bottom { flex:none; height:25px; }
  .mini { display:flex; justify-content:space-between; width:32px; height:17px; align-items:center; }
  .mini .plain { width:15px; height:12px; }
  .pair { flex:none; display:grid; width:27px; height:28px; }
  .pair span { grid-area:1 / 1; width:18px; height:18px; }
  .pair .front { background:#881800; border:1px solid #ddd; outline:1px solid #444; outline-offset:-2px; }
  .pair .back { background:#fff; place-self:end; }

  .document { flex:1; min-width:0; display:flex; flex-direction:column; margin-left:2px; }
  .doc-tabs { height:18px; background:#383838; }
  .doc-tab { height:18px; padding:0 9px; background:#535353; font-weight:700; }
  .view { flex:1; min-height:0; display:flex; }
  .work { flex:1; padding:25px 17px 25px 15px; background:#262626; }
  .canvas { height:100%; background:#fff; border:1px solid #111; }
  .scroll-v { width:15px; background:linear-gradient(90deg, #333, #444); }
  .status { height:16px; display:flex; align-items:center; background:#333; }
  .status > * { height:16px; display:flex; align-items:center; justify-content:center; background:#404040; border-right:1px solid #2c2c2c; }
  .zoom { width:44px; }
  .share { width:23px; }
  .doc-size { width:159px; }
  .more { width:14px; }
  .status .scroll-h { flex:1; background:#383838; }
  .status .corner { width:15px; background:#505050; }
  .tabs { flex:none; display:flex; height:17px; background:#3a3a3a; }
  .tab { padding:0 6px; color:#999; border-right:1px solid #303030; font-weight:700; }
  .tab.active { background:#535353; color:#eee; }
  .panel-menu { margin-left:auto; padding-right:3px; }
  .document .tabs { height:20px; border-top:1px solid #2a2a2a; border-bottom:2px solid #2a2a2a; }

  .dock { width:36px; margin:0 2px; background:#535353; border-left:1px solid #333; }
  .dock-box { height:38px; display:flex; flex-direction:column; align-items:center; gap:3px; padding-top:4px; border-bottom:1px solid #333; }
  .panels { width:208px; display:flex; flex-direction:column; }
  .panel { background:#535353; margin-bottom:2px; }
  .color { display:flex; padding:7px 0 0 6px; height:75px; }
  .color-left { width:32px; display:flex; flex-direction:column; justify-content:space-between; padding:1px 0 7px; }
  .gamut { display:flex; align-items:center; gap:3px; padding-left:4px; }
  .gamut span { width:11px; height:11px; background:#7c1c24; border:1px solid #ddd; }
  .sliders { flex:1; display:flex; flex-direction:column; justify-content:space-between; height:63px; }
  .channel { display:flex; height:18px; }
  .channel label { width:17px; padding-left:2px; line-height:16px; font-size:10px; }
  .slider { width:79px; padding-top:1px; }
  .bar { height:6px; border:1px solid #a8a8a8; }
  .bar.red { background:linear-gradient(90deg, #002100, #f21000); }
  .bar.green { background:linear-gradient(90deg, #880000, #88ff00); }
  .bar.blue { background:linear-gradient(90deg, #882100, #8821ff); }
  .slider input { appearance:none; display:block; width:89px; height:9px; margin:0 -5px; background:none; }
  .slider input::-webkit-slider-thumb { appearance:none; width:10px; height:8px; background:#bbb; clip-path:polygon(50% 0, 100% 70%, 100% 100%, 0 100%, 0 70%); }
  .num { width:43px; height:17px; margin-left:6px; padding:0 4px; border:1px solid #333; background:#404040; }
  .spectrum { display:flex; height:18px; padding:0 17px 4px 5px; }
  .ramp { flex:1; background:linear-gradient(#fff8, #fff0 40%, #0000 60%, #0004), linear-gradient(90deg, #e82020, #f8f020 17%, #00a040 31%, #10b0e0 48%, #201878 66%, #d81890 80%, #e01820); }
  .ends { width:7px; background:linear-gradient(#fff 50%, #000 50%); }
  .adjust { height:97px; padding:4px 24px 0 8px; }
  h2 { margin:0; font-size:10px; line-height:14px; font-weight:700; color:#fff; }
  .adj-row { display:flex; justify-content:center; gap:4px; height:25px; align-items:center; }

  .panel.layers { flex:1; min-height:0; display:flex; flex-direction:column; margin:0; }
  .row { flex:none; display:flex; align-items:center; height:27px; padding:0 4px 0 5px; gap:6px; border-bottom:1px solid #424242; color:#b4b4b4; }
  .row.first { height:25px; }
  .row .select { background:#5a5a5a; border-color:#484848; }
  .row :global(svg) { color:#9a9a9a; }
  .kind { width:64px; }
  .kind .lens { grid-area:1 / 1; padding-left:4px; }
  .kind select { padding-left:18px; }
  .blend { width:103px; }
  .filters { display:flex; gap:4px; margin-left:2px; }
  .switch { width:7px; height:15px; margin-left:auto; background:linear-gradient(#666 50%, #3c3c3c 50%); border:1px solid #3c3c3c; }
  .amount { margin-left:auto; }
  .combo.small { width:51px; border-color:#444; }
  .combo.small input { background:#4b4b4b; color:#707070; }
  .locks { display:flex; gap:2px; }
  .list { flex:1; display:flex; min-height:0; }
  .items { flex:1; background:#444; }
  .list-scroll { width:14px; background:#3c3c3c; }
  .layer { display:flex; height:27px; border-bottom:1px solid #333; }
  .eye { width:29px; display:flex; align-items:center; justify-content:center; background:#505050; }
  .layer-body { flex:1; display:flex; align-items:center; padding:0 13px 0 2px; background:#5a6478; border-left:1px solid #3a3a3a; }
  .layer-body em { flex:1; margin-left:9px; font-size:9px; color:#fff; }
  .thumb { width:31px; height:19px; background:#fff; border:1px solid #222; }
  .layer-foot { flex:none; display:flex; align-items:center; gap:6px; height:18px; padding-left:15px; border-top:1px solid #3a3a3a; border-bottom:1px solid #2a2a2a; }
  .layer-foot i { font-size:11px; color:#ccc; }
  .layer-foot .dim-icon { opacity:.6; }

  .taskbar { position:relative; flex:none; height:37px; display:flex; align-items:center; background:linear-gradient(90deg, #93a6c4, #96a9c8 5%, #a6b9da 12%, #a9bcdc 81%, #8394ae 85%, #8091ab); border-top:1px solid #c6d0de; }
  .taskbar::after { content:""; position:absolute; left:35%; right:35%; bottom:1px; height:1px; background:#dce4f0; }
  .task { width:50px; height:36px; margin-right:8px; display:flex; align-items:center; justify-content:center; }
  .task.running { width:56px; margin-left:-2px; background:linear-gradient(#f4f6fa, #cdd8ea); border:1px solid #7d8aa0; }
  .ps-tile { width:28px; height:26px; border:2px solid #7ba0d4; background:#1a1a5c; color:#9fc8f8; font-size:14px; line-height:21px; margin-bottom:4px; }
  .tray { margin-left:auto; display:flex; align-items:center; gap:7px; height:100%; color:#fff; font-size:11px; font-weight:400; }
  .up { margin-right:4px; }
  time { width:58px; line-height:16px; text-align:center; white-space:nowrap; }
  .peek { width:12px; height:100%; background:linear-gradient(#60708c, #a4b4cc 50%, #5c6c88); border:1px solid #4c5c78; }
</style>
